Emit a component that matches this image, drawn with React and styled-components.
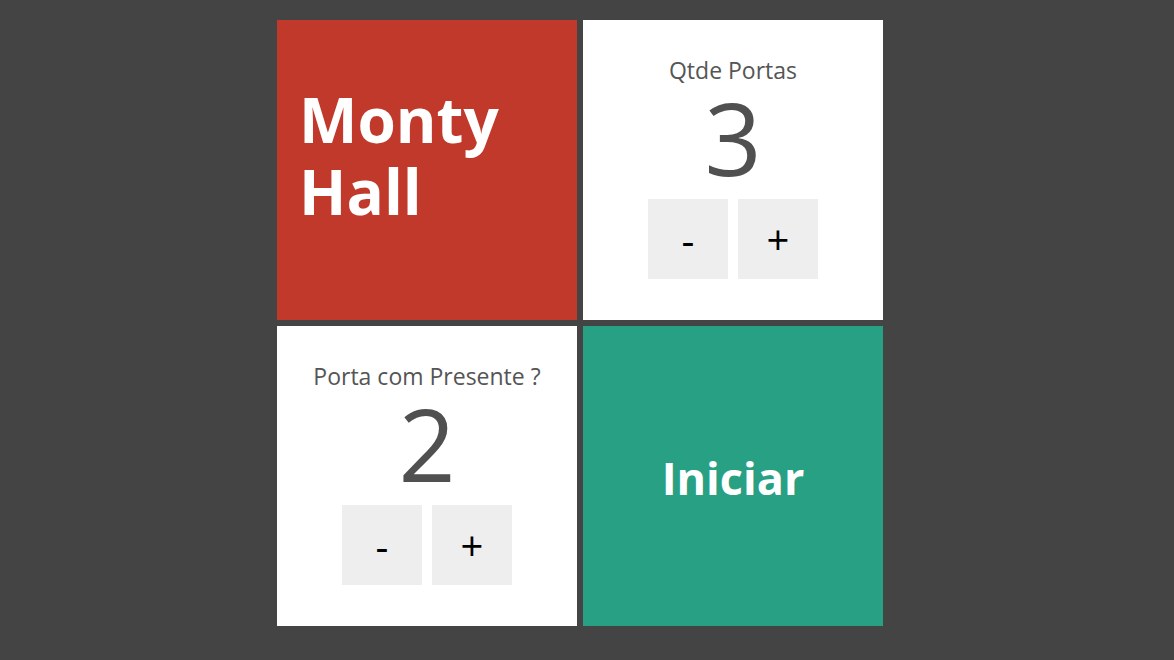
import React, { useState } from 'react';
import styled, { createGlobalStyle } from 'styled-components';

const GlobalStyle = createGlobalStyle`
  html, body {
    margin: 0;
    padding: 0;
    background-color: #444444;
    font-family: "Open Sans", "Noto Sans", sans-serif;
  }
`;

const Page = styled.div`
  min-height: 100vh;
  box-sizing: border-box;
  display: flex;
  justify-content: center;
  align-items: flex-start;
  padding: 20px 14px 0 0;
  background-color: #444444;
`;

const Grid = styled.div`
  display: grid;
  grid-template-columns: 300px 300px;
  grid-template-rows: 300px 300px;
  gap: 6px;
`;

const Card = styled.div`
  width: 300px;
  height: 300px;
  box-sizing: border-box;
  background-color: ${(p) => p.bg || '#ffffff'};
`;

const TitleCard = styled(Card)`
  padding: 63px 0 0 22px;
`;

const Title = styled.h1`
  margin: 0;
  color: #ffffff;
  font-size: 62px;
  line-height: 72px;
  font-weight: 700;
`;

const CounterCard = styled(Card)`
  display: flex;
  flex-direction: column;
  align-items: center;
  padding-top: 37px;
`;

const Label = styled.span`
  color: #555555;
  font-size: 23px;
  line-height: 26px;
`;

const Value = styled.span`
  color: #505050;
  font-size: 100px;
  line-height: 100px;
  margin-top: 4px;
`;

const Buttons = styled.div`
  display: flex;
  gap: 10px;
  margin-top: 12px;
`;

const StepButton = styled.button`
  width: 80px;
  height: 80px;
  border: none;
  padding: 0;
  background-color: #eeeeee;
  color: #000000;
  font-family: inherit;
  font-size: 40px;
  cursor: pointer;
`;

const StartCard = styled(Card)`
  display: flex;
  align-items: center;
  justify-content: center;
  cursor: pointer;
`;

const StartText = styled.span`
  color: #ffffff;
  font-size: 45px;
  font-weight: 700;
  margin-top: 2px;
`;

const Counter = ({ label, value, onChange }) => (
  <CounterCard>
    <Label>{label}</Label>
    <Value>{value}</Value>
    <Buttons>
      <StepButton onClick={() => onChange(value - 1)}>-</StepButton>
      <StepButton onClick={() => onChange(value + 1)}>+</StepButton>
    </Buttons>
  </CounterCard>
);

export default function App() {
  const [doors, setDoors] = useState(3);
  const [gift, setGift] = useState(2);

  return (
    <Page>
      <GlobalStyle />
      <Grid>
        <TitleCard bg="#c0392b">
          <Title>
            Monty
            <br />
            Hall
          </Title>
        </TitleCard>
        <Counter label="Qtde Portas" value={doors} onChange={setDoors} />
        <Counter label="Porta com Presente ?" value={gift} onChange={setGift} />
        <StartCard bg="#28a084">
          <StartText>Iniciar</StartText>
        </StartCard>
      </Grid>
    </Page>
  );
}
